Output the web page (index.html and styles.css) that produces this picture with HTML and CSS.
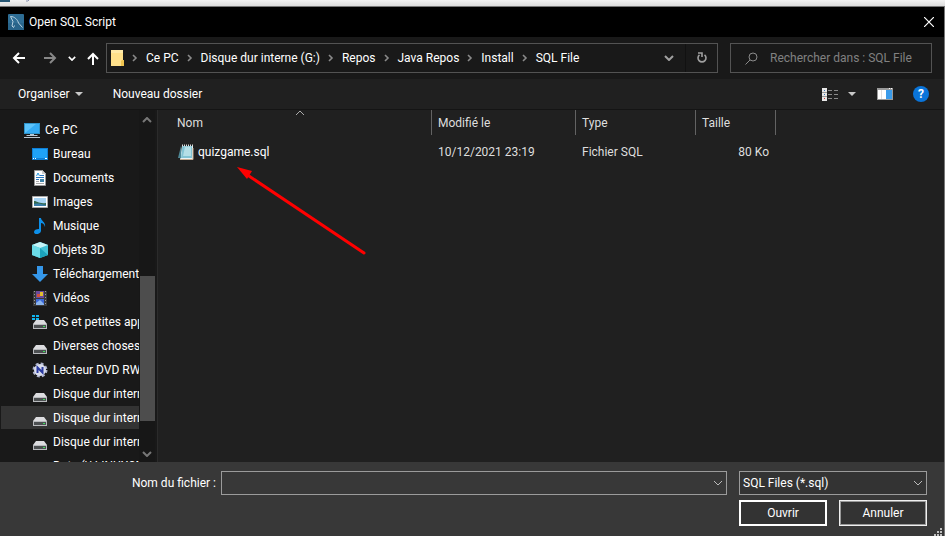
FILE: index.html
```
<!DOCTYPE html>
<html lang="fr">
  <head>
    <meta charset="utf-8">
    <title>Open SQL Script</title>
    <link rel="stylesheet" href="styles.css">
  </head>
  <body>
    <!-- icons used more than once -->
    <svg class="defs" aria-hidden="true">
      <symbol id="crumb" viewBox="0 0 6 8"><path d="M1 1l3 3-3 3" fill="none" stroke="#8a8a8a" stroke-width="1.6"/></symbol>
      <symbol id="chevron" viewBox="0 0 10 6"><path d="M1 1l4 4 4-4" fill="none" stroke="currentColor"/></symbol>
      <symbol id="chevron-bold" viewBox="0 0 10 6"><path d="M1 1l4 4 4-4" fill="none" stroke="currentColor" stroke-width="2"/></symbol>
      <symbol id="triangle" viewBox="0 0 8 4"><path d="M0 0h8L4 4z" fill="#c8c8c8"/></symbol>
      <symbol id="drive" viewBox="0 0 16 16">
        <path d="M4 7h8l3 4H1z" fill="#dcdcdf"/>
        <path d="M1 11h14v5H1z" fill="#b8babd"/>
        <path d="M2 12h12v3H2z" fill="#4c4f51"/>
        <path d="M11 13h2v1h-2z" fill="#3fe05a"/>
      </symbol>
    </svg>

    <div class="backdrop">
      <svg width="40" height="6" viewBox="0 0 40 6"><path d="M0 0h10v2H0z" fill="#265673"/><path d="M26 1h2l1-1" fill="none" stroke="#8a93b0"/></svg>
    </div>

    <div class="dialog">
      <header class="titlebar">
        <svg width="16" height="16" viewBox="0 0 16 16">
          <rect width="16" height="16" rx="1" fill="#2e6d94"/>
          <path d="M0 9h16v7H0z" fill="#28648a"/>
          <path d="M2.500 2.500c4 0 7 3 8 6.500l4 4.500M2.500 2.500c.5 2 2 3 2.500 5l-1 4.500 1.500 1.500 1-2" fill="none" stroke="#b9d3e2"/>
        </svg>
        <h1>Open SQL Script</h1>
        <button class="icon-btn close" aria-label="Fermer">
          <svg width="10" height="10" viewBox="0 0 10 10"><path d="M0 0l10 10M10 0L0 10" stroke="#fff" stroke-width="1.2"/></svg>
        </button>
      </header>

      <nav class="navbar">
        <div class="history">
          <button class="icon-btn back" aria-label="Retour"><svg width="14" height="12" viewBox="0 0 14 12"><path d="M13 6H2M7 1L2 6l5 5" fill="none" stroke="#fff" stroke-width="2"/></svg></button>
          <button class="icon-btn" aria-label="Suivant"><svg width="14" height="12" viewBox="0 0 14 12"><path d="M1 6h11M7 1l5 5-5 5" fill="none" stroke="#888" stroke-width="2"/></svg></button>
          <button class="icon-btn" aria-label="Emplacements récents"><svg width="8" height="5" viewBox="0 0 10 6"><use href="#chevron-bold"/></svg></button>
          <button class="icon-btn" aria-label="Dossier parent"><svg width="12" height="13" viewBox="0 0 12 13"><path d="M6 13V2M1 7l5-5 5 5" fill="none" stroke="#fff" stroke-width="2"/></svg></button>
        </div>

        <div class="address">
          <svg class="folder" width="14" height="16" viewBox="0 0 14 16"><path d="M0 0h12v16H0z" fill="#ffe08a"/><path d="M0 0h12v3H0z" fill="#ffe9a6"/><path d="M11 10h2v6h-3v-5z" fill="#f1c550"/></svg>
          <ol class="crumbs">
            <li><svg width="6" height="8"><use href="#crumb"/></svg><a href="#">Ce PC</a></li>
            <li><svg width="6" height="8"><use href="#crumb"/></svg><a href="#">Disque dur interne (G:)</a></li>
            <li><svg width="6" height="8"><use href="#crumb"/></svg><a href="#">Repos</a></li>
            <li><svg width="6" height="8"><use href="#crumb"/></svg><a href="#">Java Repos</a></li>
            <li><svg width="6" height="8"><use href="#crumb"/></svg><a href="#">Install</a></li>
            <li><svg width="6" height="8"><use href="#crumb"/></svg><a href="#">SQL File</a></li>
          </ol>
          <button class="icon-btn drop" aria-label="Emplacements précédents"><svg width="10" height="6"><use href="#chevron-bold"/></svg></button>
          <button class="icon-btn refresh" aria-label="Actualiser">
            <svg width="12" height="12" viewBox="0 0 12 12"><path d="M8.500 2.800a4 4 0 1 1-5 0M2 1h4v4" fill="none" stroke="#a0a0a0" stroke-width="1.600"/></svg>
          </button>
        </div>

        <label class="search">
          <svg width="13" height="13" viewBox="0 0 13 13"><circle cx="8" cy="5" r="4" fill="none" stroke="#8a8a8a"/><path d="M5 8l-4.500 4.500" stroke="#8a8a8a"/></svg>
          <input type="text" placeholder="Rechercher dans : SQL File" aria-label="Rechercher">
        </label>
      </nav>

      <div class="toolbar">
        <button class="text-btn">Organiser <svg width="8" height="4"><use href="#triangle"/></svg></button>
        <button class="text-btn">Nouveau dossier</button>
        <div class="view-tools">
          <button class="icon-btn" aria-label="Affichage">
            <svg width="17" height="13" viewBox="0 0 17 13">
              <path d="M0 0h5v13H0z" fill="#e8e8e8"/>
              <path d="M0 4.500h5M0 8.500h5" stroke="#999"/>
              <path d="M2 2h1v1H2zM2 6h1v1H2z" fill="#3875b8"/><path d="M2 10h1v1H2z" fill="#c33"/>
              <path d="M6 2.500h4m2 0h4M6 6.500h4m2 0h4M6 10.500h4m2 0h4" stroke="#8a8a8a"/>
            </svg>
          </button>
          <button class="icon-btn more" aria-label="Plus d'options"><svg width="8" height="4"><use href="#triangle"/></svg></button>
          <button class="icon-btn pane" aria-label="Volet de visualisation">
            <svg width="16" height="12" viewBox="0 0 16 12"><path d="M0 0h16v12H0z" fill="#9a9a9a"/><path d="M1 2h8v9H1z" fill="#fff"/><path d="M4.500 2v9" stroke="#ddd"/><path d="M9 2h6v9H9z" fill="#3a9bea"/><path d="M12 .5h1m1 0h1" stroke="#fff"/></svg>
          </button>
          <button class="help" aria-label="Aide">?</button>
        </div>
      </div>

      <main class="content">
        <aside class="sidebar">
          <ul class="tree">
            <li class="root">
              <svg width="16" height="16" viewBox="0 0 16 16"><path d="M0 1h16v11H0z" fill="#2f93c9"/><path d="M1 2h14v9H1z" fill="#5cc3fb"/><path d="M1 11L12 2h3v9z" fill="#35acf5"/><path d="M6 12h4v1H6zM3 13h10l1 1H2zM0 15h16v1H0z" fill="#b9c6d2"/></svg>
              <a href="#">Ce PC</a>
            </li>
            <li>
              <svg width="16" height="16" viewBox="0 0 16 16"><path d="M0 2h16v12H0z" fill="#0f7fd6"/><path d="M1 3h14v9H1z" fill="#1fa2f8"/><path d="M1 12.500h1m1 0h1m9 0h2" stroke="#fff"/></svg>
              <a href="#">Bureau</a>
            </li>
            <li>
              <svg width="16" height="16" viewBox="0 0 16 16"><path d="M2.500.5h8l3 3v12h-11z" fill="#fff" stroke="#999"/><path d="M10 0v4h4" fill="#ccc"/><path d="M8 5.500h4M4 7.500h8M4 9.500h3" stroke="#2b78c0"/><path d="M4.500 6l1.500-3 1.500 3" fill="none" stroke="#2b9ae0"/><path d="M4 11.500h3M4 13.500h8" stroke="#aaa"/><path d="M8 9h4v3H8z" fill="#3f83a8"/></svg>
              <a href="#">Documents</a>
            </li>
            <li>
              <svg width="16" height="16" viewBox="0 0 16 16"><path d="M.5 2.500h15v11H.5z" fill="#fff" stroke="#a8a8a8"/><path d="M2 4h12v8H2z" fill="#a8d4f4"/><path d="M2 7c3 0 5 3 12 2v3H2z" fill="#33684e"/><path d="M2 10c4-1 7 0 12 1v1H2z" fill="#387da9"/></svg>
              <a href="#">Images</a>
            </li>
            <li>
              <svg width="16" height="16" viewBox="0 0 16 16"><path d="M7 0h2c0 3 5 4 4 9-1-3-2-4-4-4v8c-1 4-7 4-7 1 0-2 2-3 5-3z" fill="#0d8fe8"/></svg>
              <a href="#">Musique</a>
            </li>
            <li>
              <svg width="16" height="16" viewBox="0 0 16 16"><path d="M0 3l8-3 8 3v10l-8 3-8-3z" fill="#42c2d6"/><path d="M0 3l8-3 8 3-8 3z" fill="#c5f4f8"/><path d="M0 3l8 3v10l-8-3z" fill="#6bdce8"/><path d="M8 6l8 7-8 3z" fill="#1ba3bb"/></svg>
              <a href="#">Objets 3D</a>
            </li>
            <li>
              <svg width="16" height="16" viewBox="0 0 16 16"><path d="M5 0h6v8h5l-8 8-8-8h5z" fill="#3597ea"/></svg>
              <a href="#">Téléchargements</a>
            </li>
            <li>
              <svg width="16" height="16" viewBox="0 0 16 16"><path d="M1 1h14v15H1z" fill="#3a3a3a"/><path d="M2.500 1v15M13.500 1v15" stroke="#999" stroke-dasharray="1 2"/><path d="M4 1h8v7H4z" fill="#6b4a9a"/><path d="M4 9h8v6H4z" fill="#3a67d8"/><path d="M8 2h3v4H8z" fill="#e2c02e"/><path d="M5 4h3v3H5z" fill="#d0503a"/><path d="M4 13l4-3 4 4v1H4z" fill="#8bb4ec"/></svg>
              <a href="#">Vidéos</a>
            </li>
            <li>
              <svg width="16" height="16" viewBox="0 0 16 16"><use href="#drive" y="-1"/><path d="M0 1h3v2H0zM4 1h3v2H4zM0 4h3v2H0zM4 4h3v2H4z" fill="#11b5ee"/></svg>
              <a href="#">OS et petites applications (C:)</a>
            </li>
            <li><svg width="16" height="16"><use href="#drive"/></svg><a href="#">Diverses choses (D:)</a></li>
            <li>
              <svg width="16" height="16" viewBox="0 0 16 16"><circle cx="8" cy="8" r="6" fill="none" stroke="#aeb4cc" stroke-width="3" stroke-dasharray="2.700 2"/><circle cx="8" cy="8" r="6" fill="#d9dcec"/><path d="M5.500 11V5.500l5 5V5" fill="none" stroke="#2a3aa0" stroke-width="2"/></svg>
              <a href="#">Lecteur DVD RW (E:)</a>
            </li>
            <li><svg width="16" height="16"><use href="#drive"/></svg><a href="#">Disque dur interne (F:)</a></li>
            <li class="selected"><svg width="16" height="16"><use href="#drive"/></svg><a href="#">Disque dur interne (G:)</a></li>
            <li><svg width="16" height="16"><use href="#drive"/></svg><a href="#">Disque dur interne (H:)</a></li>
            <li><svg width="16" height="16"><use href="#drive"/></svg><a href="#">Data (\\LINUXSMB)</a></li>
          </ul>
          <div class="scrollbar">
            <svg class="up" width="10" height="6"><use href="#chevron-bold"/></svg>
            <div class="thumb"></div>
            <svg width="10" height="6"><use href="#chevron-bold"/></svg>
          </div>
        </aside>

        <section class="files">
          <table>
            <thead>
              <tr>
                <th class="name">Nom <svg class="sort" width="10" height="6"><use href="#chevron"/></svg></th>
                <th class="date">Modifié le</th>
                <th class="type">Type</th>
                <th class="size">Taille</th>
              </tr>
            </thead>
            <tbody>
              <tr>
                <td class="name">
                  <div class="file">
                    <svg width="16" height="17" viewBox="0 0 16 17"><path d="M4 2h11v14H2z" fill="#e9f3f5"/><path d="M4 2h10v12H3z" fill="#83c4d4"/><path d="M7 3h6v9H5z" fill="#b4dfe7"/><path d="M3 2L0 14h3z" fill="#4e8795"/><path d="M4 1.500h11" stroke="#ddd" stroke-width="2" stroke-dasharray="1 1"/><path d="M2 15.500h13V4" fill="none" stroke="#c3ac91"/></svg>
                    quizgame.sql
                  </div>
                </td>
                <td>10/12/2021 23:19</td>
                <td>Fichier SQL</td>
                <td class="size">80 Ko</td>
              </tr>
            </tbody>
          </table>
          <svg class="pointer" width="130" height="90" viewBox="0 0 130 90">
            <path d="M9 7l118 79" stroke="#f00" stroke-width="3" stroke-linecap="round"/>
            <path d="M0 0l15 4-5 8z" fill="#f00"/>
          </svg>
        </section>
      </main>

      <footer class="footer">
        <label for="filename">Nom du fichier :</label>
        <div class="combo">
          <input id="filename" type="text">
          <svg width="10" height="6"><use href="#chevron"/></svg>
        </div>
        <div class="combo filter">
          <select aria-label="Type de fichier"><option>SQL Files (*.sql)</option></select>
          <svg width="10" height="6"><use href="#chevron"/></svg>
        </div>
        <div class="actions">
          <button class="btn default">Ouvrir</button>
          <button class="btn">Annuler</button>
        </div>
        <svg class="grip" width="8" height="8" viewBox="0 0 8 8"><path d="M6 0h2v2H6zM3 3h2v2H3zM6 3h2v2H6zM0 6h2v2H0zM3 6h2v2H3zM6 6h2v2H6z" fill="#bfbfbf"/></svg>
      </footer>
    </div>
  </body>
</html>
```
FILE: styles.css
```
* {
  box-sizing: border-box;
}

body {
  margin: 0;
  height: 100vh;
  display: flex;
  flex-direction: column;
  font: 12px/16px Roboto, "Open Sans", sans-serif;
  color: #fff;
  background: #383838;
  overflow: hidden;
}

button,
input,
select {
  font: inherit;
  color: inherit;
  background: none;
  border: 0;
  padding: 0;
  margin: 0;
}

a {
  color: inherit;
  text-decoration: none;
}

ul,
ol {
  list-style: none;
  margin: 0;
  padding: 0;
}

svg {
  display: block;
  flex: none;
}

.defs {
  position: absolute;
  width: 0;
  height: 0;
}

.icon-btn {
  display: flex;
  align-items: center;
  justify-content: center;
}

.backdrop {
  height: 6px;
  flex: none;
  background: linear-gradient(#f2f2f2, #dcdcdc);
}

.dialog {
  flex: 1;
  min-height: 0;
  display: flex;
  flex-direction: column;
  border-top: 1px solid #777;
  border-right: 1px solid #777;
}

/* title bar */
.titlebar {
  height: 30px;
  flex: none;
  display: flex;
  align-items: center;
  gap: 5px;
  padding: 0 10px 0 8px;
  background: #000;
}

.titlebar h1 {
  margin: 0;
  font-size: 12px;
  font-weight: normal;
}

.close {
  margin-left: auto;
}

/* navigation */
.navbar {
  height: 42px;
  flex: none;
  display: flex;
  align-items: center;
  padding: 0 12px;
  background: #191919;
}

.history {
  display: flex;
  align-items: center;
  gap: 11px;
  margin-right: 7px;
}

.history .back {
  margin-right: 6px;
}

.address {
  flex: 1;
  display: flex;
  align-items: center;
  height: 30px;
  padding-left: 4px;
  border: 1px solid #535353;
}

.crumbs {
  display: flex;
  flex: 1;
  margin-left: 7px;
}

.crumbs li {
  display: flex;
  align-items: center;
  gap: 8px;
  margin-right: 8px;
}

.drop {
  width: 32px;
  height: 28px;
  color: #a0a0a0;
}

.refresh {
  width: 32px;
  height: 28px;
  border-left: 1px solid #111;
}

.search {
  width: 202px;
  height: 30px;
  display: flex;
  align-items: center;
  gap: 12px;
  margin-left: 12px;
  padding: 0 14px;
  border: 1px solid #535353;
}

.search input {
  flex: 1;
  min-width: 0;
}

.search input::placeholder {
  color: #818181;
  opacity: 1;
}

/* toolbar */
.toolbar {
  height: 31px;
  flex: none;
  display: flex;
  align-items: center;
  gap: 30px;
  padding: 0 15px 0 18px;
  background: #202020;
  border-bottom: 1px solid #141414;
}

.text-btn {
  display: flex;
  align-items: center;
  gap: 5px;
}

.view-tools {
  display: flex;
  align-items: center;
  margin-left: auto;
}

.view-tools .more {
  margin-left: 9px;
}

.view-tools .pane {
  margin-left: 21px;
}

.help {
  width: 16px;
  height: 16px;
  margin-left: 20px;
  border-radius: 50%;
  background: #0a74d9;
  font-weight: bold;
  line-height: 16px;
}

/* folder tree + files */
.content {
  flex: 1;
  min-height: 0;
  display: flex;
  background: #202020;
}

.sidebar {
  width: 158px;
  display: flex;
  background: #191919;
  border-right: 1px solid #2b2b2b;
}

.tree {
  flex: 1;
  min-width: 0;
  padding: 8px 0 0 1px;
  overflow: hidden;
}

.tree li {
  display: flex;
  align-items: center;
  gap: 5px;
  height: 23px;
  margin-bottom: 1px;
  padding-left: 31px;
  white-space: nowrap;
}

.tree .root {
  padding-left: 23px;
}

.tree .selected {
  background: #333;
}

.scrollbar {
  width: 16px;
  margin-right: 2px;
  padding: 7px 0 5px;
  display: flex;
  flex-direction: column;
  align-items: center;
  background: #171717;
  color: #777;
}

.scrollbar .up {
  transform: rotate(180deg);
}

.thumb {
  width: 15px;
  height: 145px;
  margin: auto 0 30px;
  background: #4d4d4d;
}

.files {
  position: relative;
  flex: 1;
  min-width: 0;
}

table {
  table-layout: fixed;
  width: 618px;
  border-collapse: separate;
  border-spacing: 0;
  color: #dedede;
}

th {
  position: relative;
  height: 25px;
  padding: 0 6px;
  font-weight: normal;
  text-align: left;
  border-right: 1px solid #636363;
}

th.name {
  width: 274px;
  padding-left: 19px;
}

th.date {
  width: 144px;
}

th.type {
  width: 120px;
}

th.size {
  width: 80px;
}

.sort {
  position: absolute;
  top: 0;
  left: 50%;
  color: #aaa;
  transform: rotate(180deg);
}

td {
  height: 34px;
  padding: 0 7px 0 6px;
}

td.name {
  padding-left: 20px;
  color: #fff;
}

td.size {
  text-align: right;
}

.file {
  display: flex;
  align-items: center;
  gap: 4px;
}

/* red arrow pointing at the script */
.pointer {
  position: absolute;
  left: 79px;
  top: 57px;
}

/* footer */
.footer {
  position: relative;
  flex: none;
  display: grid;
  grid-template-columns: 216px 1fr 188px;
  column-gap: 12px;
  row-gap: 5px;
  align-items: center;
  padding: 9px 17px 10px 0;
  background: #383838;
}

.footer label {
  text-align: right;
}

.combo {
  display: grid;
  align-items: center;
  height: 24px;
  margin-left: -7px;
  border: 1px solid #9b9b9b;
  background: #383838;
  color: #bbb;
}

.combo > * {
  grid-area: 1 / 1;
}

.combo input,
.combo select {
  width: 100%;
  height: 22px;
  padding: 0 3px;
  color: #fff;
  appearance: none;
}

.combo svg {
  justify-self: end;
  margin-right: 3px;
  pointer-events: none;
}

.filter {
  margin-left: 0;
  background: #333;
}

.actions {
  grid-column: 3;
  display: grid;
  grid-template-columns: 1fr 1fr;
  gap: 12px;
}

.btn {
  height: 26px;
  background: #333;
  border: 1px solid #f0f0f0;
  box-shadow: inset 0 0 0 1px #999;
}

.default {
  border: 2px solid #fff;
  box-shadow: none;
}

.grip {
  position: absolute;
  right: 2px;
  bottom: 0;
}
```
